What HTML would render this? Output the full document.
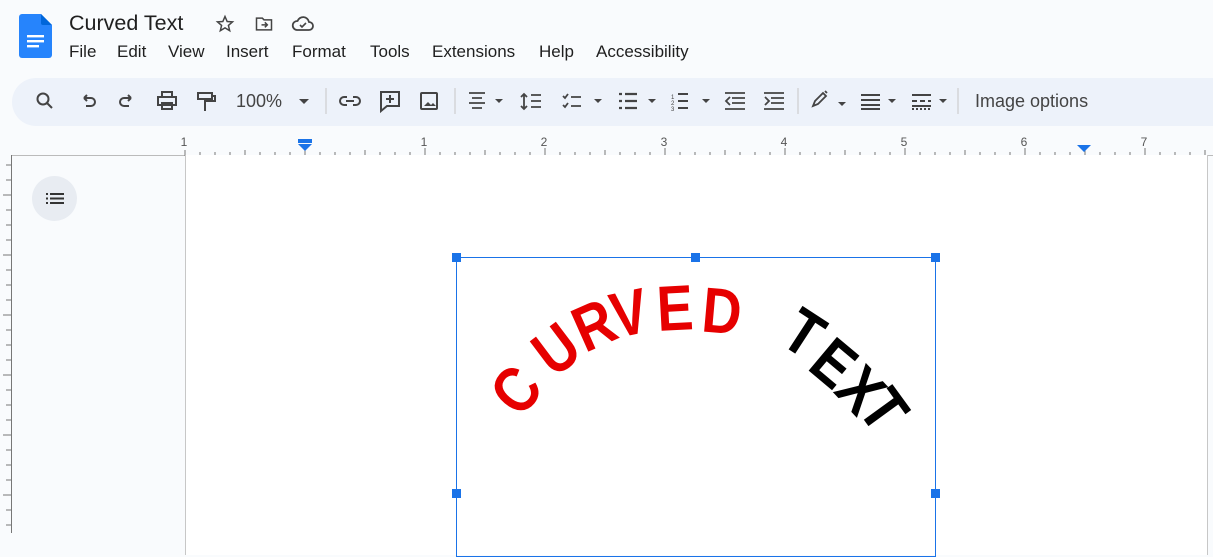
<!DOCTYPE html>
<html><head><meta charset="utf-8"><style>
*{margin:0;padding:0;box-sizing:border-box}
body{width:1213px;height:533px;overflow:hidden;background:#f9fbfd;font-family:"Liberation Sans",Arial,sans-serif;position:relative;color:#1f1f1f}
.a{position:absolute}
.menu span{position:absolute;top:42px;font-size:17px;color:#1f1f1f}
svg.i{position:absolute}
</style></head><body>
<svg class="i" style="left:19px;top:14px" width="33" height="44" viewBox="0 0 33 44"><path d="M3 0h19l11 11v30a3 3 0 0 1-3 3H3a3 3 0 0 1-3-3V3a3 3 0 0 1 3-3z" fill="#2684fc"/><path d="M22 0l11 11H24a2 2 0 0 1-2-2z" fill="#0066da"/><rect x="8" y="21" width="17" height="2.4" fill="#fff"/><rect x="8" y="26" width="17" height="2.4" fill="#fff"/><rect x="8" y="31" width="12" height="2.4" fill="#fff"/></svg>
<div class="a" style="left:69px;top:11px;font-size:21.5px;color:#1f1f1f">Curved Text</div>
<svg class="i" style="left:214px;top:14px" width="22" height="20" viewBox="0 0 24 24"><path d="M12 3l2.6 6 6.4.5-4.9 4.2 1.5 6.3L12 16.6 6.4 20l1.5-6.3L3 9.5 9.4 9z" fill="none" stroke="#444" stroke-width="1.8"/></svg>
<svg class="i" style="left:253px;top:14px" width="22" height="20" viewBox="0 0 24 24"><path d="M3 5h7l2 2h9v12H3z" fill="none" stroke="#444" stroke-width="1.8"/><path d="M9 13h7m-3-3l3 3-3 3" fill="none" stroke="#444" stroke-width="1.8"/></svg>
<svg class="i" style="left:291px;top:14px" width="24" height="20" viewBox="0 0 24 20"><path d="M6 16h12a4 4 0 0 0 0-8 6 6 0 0 0-11.5-1A4.5 4.5 0 0 0 6 16z" fill="none" stroke="#444" stroke-width="1.8"/><path d="M9 11l2 2 4-4" fill="none" stroke="#444" stroke-width="1.6"/></svg>
<div class="menu"><span style="left:69px">File</span><span style="left:117px">Edit</span><span style="left:168px">View</span><span style="left:226px">Insert</span><span style="left:292px">Format</span><span style="left:370px">Tools</span><span style="left:432px">Extensions</span><span style="left:539px">Help</span><span style="left:596px">Accessibility</span></div>
<div class="a" style="left:12px;top:78px;width:1230px;height:48px;background:#edf2fa;border-radius:24px"></div>
<svg class="i" style="left:0;top:78px" width="1213" height="48" viewBox="0 78 1213 48" fill="none" stroke="#444" stroke-width="2">
<circle cx="43" cy="99" r="5.5"/><path d="M47 103l5 5"/>
<path d="M84 98h7a4 4 0 0 1 0 8h-5M84 98l3-3M84 98l3 3"/>
<path d="M131 98h-7a4 4 0 0 0 0 8h5M131 98l-3-3M131 98l-3 3"/>
<path d="M162 97v-5h10v5M158 97h18v8h-18zM162 103h10v6h-10z"/>
<path d="M198 93h14v6h-14zM212 96h3v5h-10v4M205 105v6"/>
<path d="M299 99l5 5 5-5z" fill="#444" stroke="none"/>
<path d="M326 88v26M455 88v26M798 88v26M958 88v26" stroke="#c7c7c7" stroke-width="1"/>
<path d="M347 97h-3a4 4 0 0 0 0 8h3M353 97h3a4 4 0 0 1 0 8h-3M346 101h8"/>
<path d="M381 92h18v14h-12l-6 5z M390 95v8M386 99h8"/>
<rect x="421" y="93" width="16" height="16" rx="1"/><path d="M424 106l4-4 3 3 2-2 3 3z" fill="#444" stroke="none"/>
<path d="M469 93h16M472 98h10M469 103h16M472 108h10" stroke-width="1.8"/><path d="M495 99l4 4 4-4z" fill="#444" stroke="none"/>
<path d="M524 94v15M521 97l3-3 3 3M521 106l3 3 3-3M531 95h10M531 101h10M531 107h10" stroke-width="1.8"/>
<path d="M563 96l2 2 3-4M563 105l2 2 3-4M571 97h10M571 106h10" stroke-width="1.8"/><path d="M594 99l4 4 4-4z" fill="#444" stroke="none"/>
<path d="M619 94h3M619 101h3M619 108h3M625 94h12M625 101h12M625 108h12" stroke-width="2.2"/><path d="M648 99l4 4 4-4z" fill="#444" stroke="none"/>
<path d="M678 94h10M678 101h10M678 108h10" stroke-width="2"/><text x="671" y="99" font-size="6" fill="#444" stroke="none">1</text><text x="671" y="105" font-size="6" fill="#444" stroke="none">2</text><text x="671" y="111" font-size="6" fill="#444" stroke="none">3</text><path d="M702 99l4 4 4-4z" fill="#444" stroke="none"/>
<path d="M725 93h20M732 98h13M732 103h13M725 109h20M730 97l-4 4 4 4" stroke-width="1.8"/>
<path d="M764 93h20M771 98h13M771 103h13M764 109h20M765 97l4 4-4 4" stroke-width="1.8"/>
<path d="M813 106l2-5 8-8 3 3-8 8z M825 91l2 2" stroke-width="1.8"/><path d="M838 102l4 4 4-4z" fill="#444" stroke="none"/>
<path d="M861 95h19M861 100h19M861 105h19M861 109h19" stroke-width="2"/><path d="M888 99l4 4 4-4z" fill="#444" stroke="none"/>
<path d="M912 95h19M912 101h5M920 101h5M928 101h3M912 106h19" stroke-width="2"/><path d="M912 109h19" stroke-dasharray="2 2"/><path d="M939 99l4 4 4-4z" fill="#444" stroke="none"/>
</svg>
<div class="a" style="left:236px;top:91px;font-size:18px;color:#444">100%</div>
<div class="a" style="left:975px;top:91px;font-size:18px;color:#444">Image options</div>
<svg class="i" style="left:0;top:130px" width="1213" height="30" viewBox="0 130 1213 30">
<path d="M12 155.5H1213" stroke="#bbb"/>
<g stroke="#777" stroke-width="1">
<path d="M185 150v6M200 152v3M215 152v3M230 152v3M245 150v5M260 152v3M275 152v3M290 152v3M305 146v9M320 152v3M335 152v3M350 152v3M365 150v5M380 152v3M395 152v3M410 152v3M425 148v7M440 152v3M455 152v3M470 152v3M485 150v5M500 152v3M515 152v3M530 152v3M545 148v7M560 152v3M575 152v3M590 152v3M605 150v5M620 152v3M635 152v3M650 152v3M665 148v7M680 152v3M695 152v3M710 152v3M725 150v5M740 152v3M755 152v3M770 152v3M785 148v7M800 152v3M815 152v3M830 152v3M845 150v5M860 152v3M875 152v3M890 152v3M905 148v7M920 152v3M935 152v3M950 152v3M965 150v5M980 152v3M995 152v3M1010 152v3M1025 148v7M1040 152v3M1055 152v3M1070 152v3M1085 150v5M1100 152v3M1115 152v3M1130 152v3M1145 148v7M1160 152v3M1175 152v3M1190 152v3M1205 150v5"/>
</g>
<g font-size="12" fill="#555" text-anchor="middle" font-family="Liberation Sans"><text x="184" y="146">1</text><text x="424" y="146">1</text><text x="544" y="146">2</text><text x="664" y="146">3</text><text x="784" y="146">4</text><text x="904" y="146">5</text><text x="1024" y="146">6</text><text x="1144" y="146">7</text></g>
<rect x="298" y="139" width="14" height="4" fill="#1a73e8"/><path d="M298 144h14l-7 7z" fill="#1a73e8"/>
<path d="M1077 145h14l-7 7z" fill="#1a73e8"/>
</svg>
<svg class="i" style="left:0;top:155px" width="14" height="378"><path d="M11.5 0v378" stroke="#777"/><g stroke="#777"><path d="M6 10h6M6 25h6M3 40h9M6 55h6M6 70h6M6 85h6M3 100h9M6 115h6M6 130h6M6 145h6M3 160h9M6 175h6M6 190h6M6 205h6M3 220h9M6 235h6M6 250h6M6 265h6M3 280h9M6 295h6M6 310h6M6 325h6M3 340h9M6 355h6M6 370h6"/></g></svg>
<div class="a" style="left:185px;top:155px;width:1023px;height:400px;background:#fff;border-left:1px solid #c7c7c7;border-right:1px solid #c7c7c7"></div>
<div class="a" style="left:32px;top:176px;width:45px;height:45px;border-radius:50%;background:#e8ecf2"></div>
<svg class="i" style="left:45px;top:192px" width="20" height="14"><path d="M1 2h2M1 6.5h2M1 11h2M5 2h14M5 6.5h14M5 11h14" stroke="#333" stroke-width="2"/></svg>
<div class="a" style="left:456px;top:257px;width:480px;height:300px;border:1px solid #1a73e8"></div>
<svg class="i" style="left:0;top:0" width="1213" height="533"><g fill="#1a73e8"><rect x="452" y="253" width="9" height="9"/><rect x="691" y="253" width="9" height="9"/><rect x="931" y="253" width="9" height="9"/><rect x="452" y="489" width="9" height="9"/><rect x="931" y="489" width="9" height="9"/></g>
<g font-family="Liberation Sans" font-weight="bold" font-size="64" text-anchor="middle" dominant-baseline="central">
<g fill="#e60000">
<text transform="translate(516,390) rotate(-50) scale(0.85,1)">C</text>
<text transform="translate(556,349) rotate(-37) scale(0.85,1)">U</text>
<text transform="translate(594,325) rotate(-24) scale(0.85,1)">R</text>
<text transform="translate(629,313) rotate(-12) scale(0.85,1)">V</text>
<text transform="translate(675,308) rotate(-3) scale(0.85,1)">E</text>
<text transform="translate(722,311) rotate(5) scale(0.85,1)">D</text>
</g>
<g fill="#000">
<text transform="translate(804,333) rotate(33) scale(0.85,1)">T</text>
<text transform="translate(834,363) rotate(40) scale(0.85,1)">E</text>
<text transform="translate(861,390) rotate(47) scale(0.85,1)">X</text>
<text transform="translate(884,410) rotate(54) scale(0.85,1)">T</text>
</g></g></svg>
</body></html>
